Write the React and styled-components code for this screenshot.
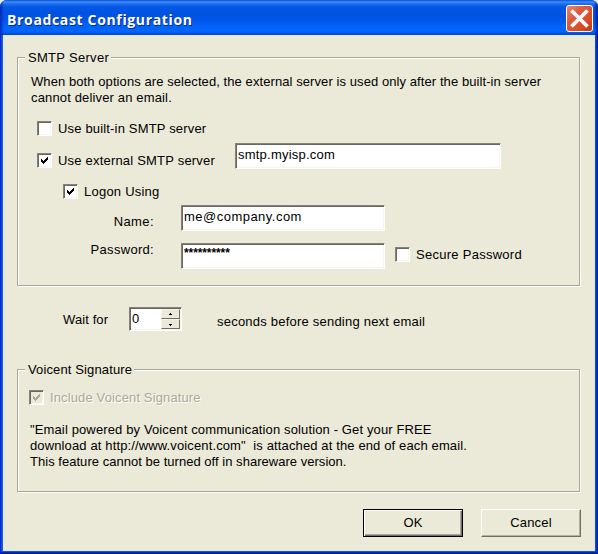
import React from "react";
import styled, { createGlobalStyle, css } from "styled-components";

const GlobalStyle = createGlobalStyle`
  body {
    margin: 0;
    background: #ebe9d8;
  }

  * {
    box-sizing: border-box;
  }
`;

const Dialog = styled.div`
  display: flex;
  flex-direction: column;
  width: 598px;
  height: 554px;
  padding: 0 3px 3px;
  border-radius: 7px 7px 0 0;
  overflow: hidden;
  background: linear-gradient(
    to right,
    #0019cf 0,
    #0831d9 1px,
    #166aee 2px,
    #0855dd 3px,
    #0855dd 595px,
    #0441d8 596px,
    #0029b8 597px,
    #001590 598px
  );
  box-shadow: inset 0 -1px 0 #001590, inset 0 -2px 0 #0029c0;
  font-family: "Liberation Sans", Arial, sans-serif;
  font-size: 13px;
  line-height: 16px;
  color: #000;
`;

const TitleBar = styled.div`
  display: flex;
  flex: none;
  justify-content: space-between;
  height: 35px;
  margin: 0 -3px;
  padding: 5px 5px 0 7px;
  background: linear-gradient(
      to right,
      rgba(0, 30, 170, 0.8) 0,
      rgba(0, 30, 170, 0) 4px,
      rgba(0, 20, 140, 0) 594px,
      rgba(0, 20, 140, 0.9) 598px
    ),
    linear-gradient(
      to bottom,
      #0a4fd6 0,
      #3c8cf8 2px,
      #1a6cf0 4px,
      #0558e6 7px,
      #0052e0 12px,
      #0055e6 19px,
      #0262fa 26px,
      #0266ff 31px,
      #0058ee 33px,
      #0043d0 35px
    );
`;

const Title = styled.div`
  font-family: "Open Sans", "Noto Sans", sans-serif;
  font-size: 14px;
  font-weight: bold;
  line-height: 30px;
  letter-spacing: 0.65px;
  color: #fff;
  text-shadow: 1px 1px 0 #0a2a90;
  white-space: nowrap;
`;

const CloseButton = styled.div`
  width: 27px;
  height: 27px;
  border: 1px solid #fff;
  border-radius: 3px;
  background: linear-gradient(135deg, #e58a70 0, #dd5c3e 35%, #da4c26 70%, #c03a10 100%);

  svg {
    display: block;
  }
`;

const Body = styled.div`
  flex: 1;
  padding: 22px 14px 0;
  background: #ebe9d8;
`;

const Group = styled.div`
  width: 563px;
  height: ${({ $height }) => $height}px;
  border: 1px solid #a8a698;
  box-shadow: 1px 1px 0 #fff, inset 1px 1px 0 #fff;
`;

const Legend = styled.div`
  width: fit-content;
  height: 16px;
  margin: -8px 0 0 7px;
  padding: 0 2px 0 3px;
  background: #ebe9d8;
`;

const Text = styled.div`
  white-space: pre;
  letter-spacing: ${({ $spacing = 0 }) => $spacing}px;
`;

const Description = styled.div`
  margin: 8px 0 15px 13px;
`;

const Row = styled.div`
  display: flex;
  align-items: flex-start;
  height: ${({ $height }) => $height}px;
  padding-left: ${({ $indent }) => $indent}px;
`;

const CheckLabel = styled.div`
  display: flex;
  gap: 6px;
  width: ${({ $width }) => ($width ? `${$width}px` : "auto")};
  margin-top: ${({ $top = 0 }) => $top}px;
  ${({ $disabled }) =>
    $disabled &&
    css`
      color: #aca899;
      text-shadow: 1px 1px 0 #fff;
    `}
`;

const sunken = css`
  border: 1px solid;
  border-color: #85827a #fff #fff #85827a;
  box-shadow: inset 1px 1px 0 #69675f, inset -1px -1px 0 #f6f5ee;
`;

const Box = styled.div`
  flex: none;
  width: 15px;
  height: 15px;
  background: ${({ $disabled }) => ($disabled ? "#ebe9d8" : "#fff")};
  ${sunken}

  svg {
    display: block;
  }
`;

const FieldLabel = styled.div`
  display: flex;
  justify-content: flex-end;
  width: 64px;
  margin: ${({ $top }) => $top}px 27px 0 0;
`;

const Field = styled.div`
  width: ${({ $width }) => $width}px;
  height: 26px;
  padding: 3px 2px;
  background: #fff;
  ${sunken}
`;

const Mask = styled(Text)`
  font-size: 12px;
  font-weight: bold;
  line-height: 13px;
`;

const WaitRow = styled.div`
  display: flex;
  align-items: flex-start;
  height: 62px;
  margin: 21px 0 0 46px;
`;

const WaitText = styled.div`
  width: ${({ $width }) => $width}px;
  padding-top: ${({ $top }) => $top}px;
`;

const Spinner = styled.div`
  display: flex;
  justify-content: space-between;
  width: 53px;
  height: 24px;
  margin-right: 35px;
  padding: 1px;
  background: #fff;
  ${sunken}
`;

const SpinnerValue = styled.div`
  padding: 2px 0 0 1px;
`;

const SpinnerButtons = styled.div`
  display: flex;
  flex-direction: column;
  width: 19px;
`;

const SpinnerButton = styled.div`
  display: flex;
  flex: 1;
  align-items: center;
  justify-content: center;
  border: 1px solid;
  border-color: #f6f4ea #716f64 #716f64 #f6f4ea;
  background: #ebe9d8;
`;

const Notice = styled.div`
  margin: 5px 0 0 12px;
`;

const Footer = styled.div`
  display: flex;
  justify-content: flex-end;
  gap: 18px;
  margin: 17px 0 0;
`;

const Button = styled.div`
  display: flex;
  align-items: center;
  justify-content: center;
  width: 100px;
  height: 28px;
  border: 1px solid;
  ${({ $primary }) =>
    $primary
      ? css`
          border-color: #000;
          box-shadow: inset 1px 1px 0 #fff, inset -1px -1px 0 #716f64, inset -2px -2px 0 #aca899;
        `
      : css`
          border-color: #fff #716f64 #716f64 #fff;
          box-shadow: inset -1px -1px 0 #b5b19f;
        `}
`;

const CheckMark = ({ color }) => (
  <svg width="13" height="13" viewBox="0 0 13 13" shapeRendering="crispEdges">
    <path d="M3 5h1v1h1v1h1v-1h1v-1h1v-1h1v-1h1v3h-1v1h-1v1h-1v1h-1v1h-1v-1h-1v-1h-1z" fill={color} />
  </svg>
);

const Checkbox = ({ label, checked, disabled, spacing, width, top }) => (
  <CheckLabel $disabled={disabled} $width={width} $top={top}>
    <Box $disabled={disabled}>
      {checked && <CheckMark color={disabled ? "#aca899" : "#000"} />}
    </Box>
    <Text $spacing={spacing}>{label}</Text>
  </CheckLabel>
);

const App = () => {
  return (
    <>
      <GlobalStyle />
      <Dialog>
        <TitleBar>
          <Title>Broadcast Configuration</Title>
          <CloseButton>
            <svg width="25" height="25" viewBox="0 0 25 25">
              <path d="M4.5 4.5L20.5 20.5M20.5 4.5L4.5 20.5" stroke="#fff" strokeWidth="3.8" />
            </svg>
          </CloseButton>
        </TitleBar>
        <Body>
          <Group $height={229}>
            <Legend>
              <Text $spacing={0.3}>SMTP Server</Text>
            </Legend>
            <Description>
              <Text $spacing={0.08}>
                When both options are selected, the external server is used only after the built-in server
              </Text>
              <Text $spacing={0.15}>cannot deliver an email.</Text>
            </Description>
            <Row $height={22} $indent={19}>
              <Checkbox label="Use built-in SMTP server" spacing={0.17} />
            </Row>
            <Row $height={41} $indent={19}>
              <Checkbox label="Use external SMTP server" checked spacing={0.2} width={198} top={10} />
              <Field $width={266}>
                <Text $spacing={0.22}>smtp.myisp.com</Text>
              </Field>
            </Row>
            <Row $height={21} $indent={45}>
              <Checkbox label="Logon Using" checked spacing={0.23} />
            </Row>
            <Row $height={38} $indent={72}>
              <FieldLabel $top={9}>
                <Text $spacing={0.4}>Name:</Text>
              </FieldLabel>
              <Field $width={204}>
                <Text $spacing={0.48}>me@company.com</Text>
              </Field>
            </Row>
            <Row $height={26} $indent={72}>
              <FieldLabel $top={-1}>
                <Text $spacing={0.3}>Password:</Text>
              </FieldLabel>
              <Field $width={204}>
                <Mask $spacing={-0.1}>**********</Mask>
              </Field>
              <Row $height={26} $indent={10}>
                <Checkbox label="Secure Password" spacing={0.27} top={4} />
              </Row>
            </Row>
          </Group>
          <WaitRow>
            <WaitText $width={66} $top={5}>
              <Text $spacing={0.1}>Wait for</Text>
            </WaitText>
            <Spinner>
              <SpinnerValue>0</SpinnerValue>
              <SpinnerButtons>
                <SpinnerButton>
                  <svg width="5" height="3" shapeRendering="crispEdges">
                    <path d="M2 0h1v1h1v1h-3v-1h1z" />
                  </svg>
                </SpinnerButton>
                <SpinnerButton>
                  <svg width="5" height="3" shapeRendering="crispEdges">
                    <path d="M1 1h3v1h-1v1h-1v-1h-1z" />
                  </svg>
                </SpinnerButton>
              </SpinnerButtons>
            </Spinner>
            <WaitText $width={220} $top={7}>
              <Text $spacing={0.22}>seconds before sending next email</Text>
            </WaitText>
          </WaitRow>
          <Group $height={123}>
            <Legend>
              <Text $spacing={0.13}>Voicent Signature</Text>
            </Legend>
            <Row $height={39} $indent={11}>
              <Checkbox label="Include Voicent Signature" checked disabled spacing={0.13} top={12} />
            </Row>
            <Notice>
              <Text $spacing={0.13}>"Email powered by Voicent communication solution - Get your FREE</Text>
              <Text $spacing={0.13}>
                {'download at http://www.voicent.com"  is attached at the end of each email.'}
              </Text>
              <Text $spacing={0.03}>This feature cannot be turned off in shareware version.</Text>
            </Notice>
          </Group>
          <Footer>
            <Button $primary>
              <Text>OK</Text>
            </Button>
            <Button>
              <Text $spacing={0.2}>Cancel</Text>
            </Button>
          </Footer>
        </Body>
      </Dialog>
    </>
  );
};

export default App;
